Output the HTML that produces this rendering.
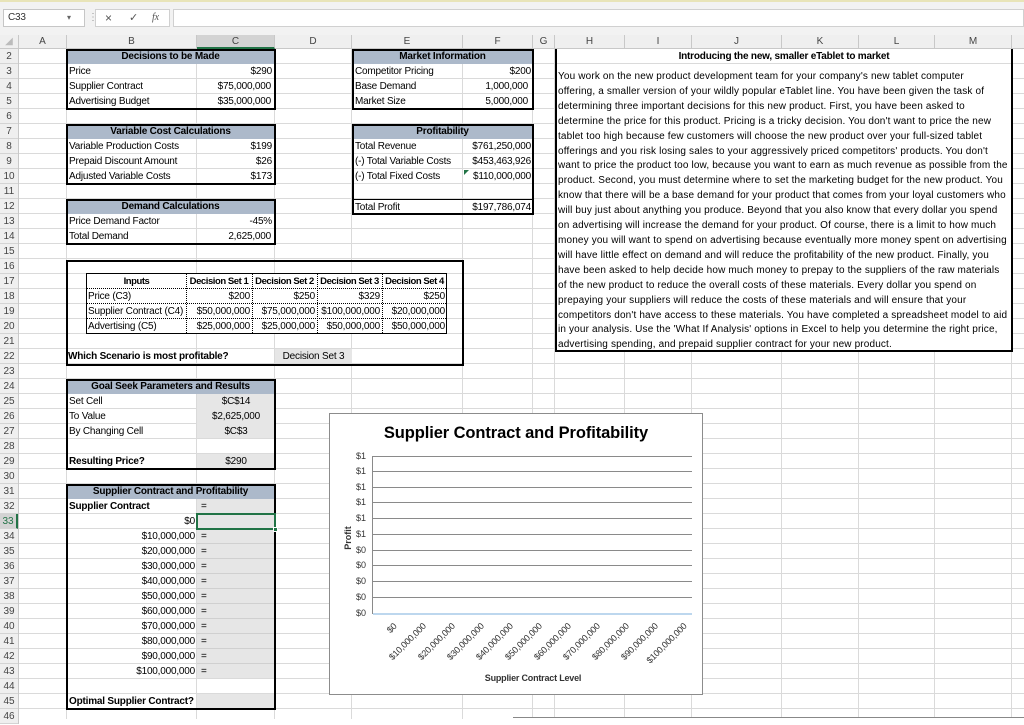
<!DOCTYPE html>
<html><head><meta charset="utf-8">
<style>
*{margin:0;padding:0;box-sizing:border-box}
body{width:1024px;height:719px;overflow:hidden;position:relative;background:#fff;font-family:"Liberation Sans",Arial,sans-serif;font-size:10px;color:#000}
.a{position:absolute}
.t{position:absolute;white-space:nowrap;line-height:16px;height:15px;font-size:10px;letter-spacing:-0.2px}
.b{font-weight:bold}
.r{text-align:right}
.c{text-align:center}
.vl{position:absolute;top:35px;width:1px;height:684px;background:#dadada}
.ch{position:absolute;top:35px;height:14px;line-height:14px;text-align:center;font-size:10px;color:#444;border-right:1px solid #c8c8c8}
.box{position:absolute;border:2px solid #000}
.hf{position:absolute;background:#acb9ca}
.g{position:absolute;background:#e6e6e6}
.rh div{height:15px;line-height:16px;border-bottom:1px solid #d4d4d4;text-align:center;font-size:10px;color:#444}
.yl{position:absolute;left:330px;width:36px;text-align:right;font-size:9px;line-height:10px;color:#333}
.gl{position:absolute;left:373px;width:319px;height:1px;background:#8a8a8a}
.xl{position:absolute;top:621px;width:0;height:0}
.xl span{position:absolute;right:0;top:0;transform:rotate(-45deg);transform-origin:100% 0;font-size:9px;white-space:nowrap;color:#333;letter-spacing:-0.2px}
.p{position:absolute;left:558px;top:70px;font-size:10px;line-height:14.9px;letter-spacing:0.15px;white-space:nowrap}
.dl{position:absolute;border-top:1px dotted #000}
.dv{position:absolute;border-left:1px dotted #000}
.sh{font-size:9.5px;letter-spacing:-0.45px}
</style></head><body>

<div class="a" style="left:0;top:0;width:1024px;height:35px;background:#f2f2f2;border-top:2px solid #e8e4b8"></div>
<div class="a" style="left:3px;top:9px;width:82px;height:18px;background:#fff;border:1px solid #c6c6c6"></div>
<div class="t" style="left:8px;top:10px;color:#333">C33</div>
<div class="t" style="left:67px;top:10px;font-size:8px;color:#666">▾</div>
<div class="t" style="left:88px;top:10px;color:#999">⋮</div>
<div class="a" style="left:95px;top:9px;width:75px;height:18px;background:#fff;border:1px solid #d0d0d0"></div>
<div class="t" style="left:105px;top:10px;font-size:12px;color:#555">×</div>
<div class="t" style="left:129px;top:10px;font-size:11px;color:#555">✓</div>
<div class="t" style="left:152px;top:10px;font-style:italic;font-family:'Liberation Serif',serif;color:#555">fx</div>
<div class="a" style="left:173px;top:9px;width:851px;height:18px;background:#fff;border:1px solid #d0d0d0"></div>

<div class="a" style="left:19px;top:49px;width:1005px;height:670px;background:repeating-linear-gradient(to bottom,transparent 0,transparent 14px,#dadada 14px,#dadada 15px)"></div>
<div class="vl" style="left:66px"></div><div class="vl" style="left:196px"></div><div class="vl" style="left:274px"></div><div class="vl" style="left:351px"></div><div class="vl" style="left:462px"></div><div class="vl" style="left:532px"></div><div class="vl" style="left:554px"></div><div class="vl" style="left:624px"></div><div class="vl" style="left:691px"></div><div class="vl" style="left:781px"></div><div class="vl" style="left:858px"></div><div class="vl" style="left:934px"></div><div class="vl" style="left:1011px"></div>

<div class="a" style="left:0;top:35px;width:1024px;height:14px;background:#efefef;border-bottom:1px solid #c8c8c8"></div>
<div class="ch" style="left:0;width:19px;color:#bbb">◢</div>
<div class="ch" style="left:19px;width:48px">A</div>
<div class="ch" style="left:67px;width:130px">B</div>
<div class="ch" style="left:197px;width:78px;background:#d3d3d3;border-bottom:2px solid #217346">C</div>
<div class="ch" style="left:275px;width:77px">D</div>
<div class="ch" style="left:352px;width:111px">E</div>
<div class="ch" style="left:463px;width:70px">F</div>
<div class="ch" style="left:533px;width:22px">G</div>
<div class="ch" style="left:555px;width:70px">H</div>
<div class="ch" style="left:625px;width:67px">I</div>
<div class="ch" style="left:692px;width:90px">J</div>
<div class="ch" style="left:782px;width:77px">K</div>
<div class="ch" style="left:859px;width:76px">L</div>
<div class="ch" style="left:935px;width:77px">M</div>

<div class="a rh" style="left:0;top:49px;width:19px;background:#efefef;border-right:1px solid #c8c8c8">
<div>2</div><div>3</div><div>4</div><div>5</div><div>6</div><div>7</div><div>8</div><div>9</div><div>10</div><div>11</div><div>12</div><div>13</div><div>14</div><div>15</div><div>16</div><div>17</div><div>18</div><div>19</div><div>20</div><div>21</div><div>22</div><div>23</div><div>24</div><div>25</div><div>26</div><div>27</div><div>28</div><div>29</div><div>30</div><div>31</div><div>32</div><div style="background:#d3d3d3;color:#217346;border-right:2px solid #217346">33</div><div>34</div><div>35</div><div>36</div><div>37</div><div>38</div><div>39</div><div>40</div><div>41</div><div>42</div><div>43</div><div>44</div><div>45</div><div>46</div>
</div>

<div class="hf" style="left:66px;top:49px;width:209px;height:15px"></div>
<div class="box" style="left:66px;top:49px;width:210px;height:61px"></div>
<div class="t b c" style="left:66px;top:49px;width:209px">Decisions to be Made</div>
<div class="t" style="left:69px;top:64px">Price</div><div class="t r" style="left:197px;top:64px;width:75px">$290</div>
<div class="t" style="left:69px;top:79px">Supplier Contract</div><div class="t r" style="left:197px;top:79px;width:74px">$75,000,000</div>
<div class="t" style="left:69px;top:94px">Advertising Budget</div><div class="t r" style="left:197px;top:94px;width:74px">$35,000,000</div>

<div class="hf" style="left:352px;top:49px;width:181px;height:15px"></div>
<div class="box" style="left:352px;top:49px;width:182px;height:61px"></div>
<div class="t b c" style="left:352px;top:49px;width:181px">Market Information</div>
<div class="t" style="left:355px;top:64px">Competitor Pricing</div><div class="t r" style="left:463px;top:64px;width:68px">$200</div>
<div class="t" style="left:355px;top:79px">Base Demand</div><div class="t r" style="left:463px;top:79px;width:65px">1,000,000</div>
<div class="t" style="left:355px;top:94px">Market Size</div><div class="t r" style="left:463px;top:94px;width:65px">5,000,000</div>

<div class="hf" style="left:66px;top:124px;width:209px;height:15px"></div>
<div class="box" style="left:66px;top:124px;width:210px;height:61px"></div>
<div class="t b c" style="left:66px;top:124px;width:209px">Variable Cost Calculations</div>
<div class="t" style="left:69px;top:139px">Variable Production Costs</div><div class="t r" style="left:197px;top:139px;width:75px">$199</div>
<div class="t" style="left:69px;top:154px">Prepaid Discount Amount</div><div class="t r" style="left:197px;top:154px;width:75px">$26</div>
<div class="t" style="left:69px;top:169px">Adjusted Variable Costs</div><div class="t r" style="left:197px;top:169px;width:75px">$173</div>

<div class="hf" style="left:352px;top:124px;width:181px;height:15px"></div>
<div class="box" style="left:352px;top:124px;width:182px;height:91px"></div>
<div class="a" style="left:352px;top:199px;width:182px;height:1px;background:#000"></div>
<div class="t b c" style="left:352px;top:124px;width:181px">Profitability</div>
<div class="t" style="left:355px;top:139px">Total Revenue</div><div class="t r" style="left:463px;top:139px;width:68px">$761,250,000</div>
<div class="t" style="left:355px;top:154px">(-) Total Variable Costs</div><div class="t r" style="left:463px;top:154px;width:68px">$453,463,926</div>
<div class="t" style="left:355px;top:169px">(-) Total Fixed Costs</div><div class="t r" style="left:463px;top:169px;width:68px">$110,000,000</div>
<div class="a" style="left:464px;top:170px;width:0;height:0;border-top:5px solid #217346;border-right:5px solid transparent"></div>
<div class="t" style="left:355px;top:200px">Total Profit</div><div class="t r" style="left:463px;top:200px;width:68px">$197,786,074</div>

<div class="hf" style="left:66px;top:199px;width:209px;height:15px"></div>
<div class="box" style="left:66px;top:199px;width:210px;height:46px"></div>
<div class="t b c" style="left:66px;top:199px;width:209px">Demand Calculations</div>
<div class="t" style="left:69px;top:214px">Price Demand Factor</div><div class="t r" style="left:197px;top:214px;width:75px">-45%</div>
<div class="t" style="left:69px;top:229px">Total Demand</div><div class="t r" style="left:197px;top:229px;width:74px">2,625,000</div>

<div class="box" style="left:66px;top:260px;width:398px;height:106px"></div>
<div class="a" style="left:86px;top:273px;width:361px;height:61px;border:1px solid #000;background:#fff"></div>
<div class="dl" style="left:87px;top:288px;width:359px"></div><div class="dl" style="left:87px;top:303px;width:359px"></div><div class="dl" style="left:87px;top:318px;width:359px"></div>
<div class="dv" style="left:186px;top:274px;height:59px"></div><div class="dv" style="left:252px;top:274px;height:59px"></div><div class="dv" style="left:317px;top:274px;height:59px"></div><div class="dv" style="left:382px;top:274px;height:59px"></div>
<div class="t b c sh" style="left:87px;top:274px;width:99px">Inputs</div>
<div class="t b c sh" style="left:186px;top:274px;width:66px">Decision Set 1</div>
<div class="t b c sh" style="left:252px;top:274px;width:65px">Decision Set 2</div>
<div class="t b c sh" style="left:317px;top:274px;width:65px">Decision Set 3</div>
<div class="t b c sh" style="left:382px;top:274px;width:65px">Decision Set 4</div>
<div class="t" style="left:88px;top:289px">Price (C3)</div>
<div class="t r" style="left:186px;top:289px;width:64px">$200</div><div class="t r" style="left:252px;top:289px;width:63px">$250</div><div class="t r" style="left:317px;top:289px;width:63px">$329</div><div class="t r" style="left:382px;top:289px;width:63px">$250</div>
<div class="t" style="left:88px;top:304px">Supplier Contract (C4)</div>
<div class="t r" style="left:186px;top:304px;width:64px">$50,000,000</div><div class="t r" style="left:252px;top:304px;width:63px">$75,000,000</div><div class="t r" style="left:317px;top:304px;width:63px">$100,000,000</div><div class="t r" style="left:382px;top:304px;width:63px">$20,000,000</div>
<div class="t" style="left:88px;top:319px">Advertising (C5)</div>
<div class="t r" style="left:186px;top:319px;width:64px">$25,000,000</div><div class="t r" style="left:252px;top:319px;width:63px">$25,000,000</div><div class="t r" style="left:317px;top:319px;width:63px">$50,000,000</div><div class="t r" style="left:382px;top:319px;width:63px">$50,000,000</div>
<div class="g" style="left:275px;top:349px;width:77px;height:14px"></div>
<div class="t b" style="left:68px;top:349px">Which Scenario is most profitable?</div>
<div class="t c" style="left:275px;top:349px;width:77px">Decision Set 3</div>

<div class="hf" style="left:66px;top:379px;width:209px;height:15px"></div>
<div class="g" style="left:197px;top:394px;width:78px;height:44px"></div>
<div class="g" style="left:197px;top:454px;width:78px;height:14px"></div>
<div class="box" style="left:66px;top:379px;width:210px;height:91px"></div>
<div class="t b c" style="left:66px;top:379px;width:209px">Goal Seek Parameters and Results</div>
<div class="t" style="left:69px;top:394px">Set Cell</div><div class="t c" style="left:197px;top:394px;width:78px">$C$14</div>
<div class="t" style="left:69px;top:409px">To Value</div><div class="t c" style="left:197px;top:409px;width:78px">$2,625,000</div>
<div class="t" style="left:69px;top:424px">By Changing Cell</div><div class="t c" style="left:197px;top:424px;width:78px">$C$3</div>
<div class="t b" style="left:69px;top:454px">Resulting Price?</div><div class="t c" style="left:197px;top:454px;width:78px">$290</div>

<div class="hf" style="left:66px;top:484px;width:209px;height:15px"></div>
<div class="g" style="left:197px;top:499px;width:78px;height:179px;background:repeating-linear-gradient(to bottom,#e6e6e6 0,#e6e6e6 14px,#d0d0d0 14px,#d0d0d0 15px)"></div>
<div class="g" style="left:197px;top:694px;width:78px;height:15px"></div>
<div class="box" style="left:66px;top:484px;width:210px;height:226px"></div>
<div class="t b c" style="left:66px;top:484px;width:209px">Supplier Contract and Profitability</div>
<div class="t b" style="left:69px;top:499px">Supplier Contract</div><div class="t" style="left:201px;top:499px">=</div>
<div class="t r" style="left:70px;top:514px;width:125px">$0</div>
<div class="a" style="left:196px;top:513px;width:80px;height:17px;border:2px solid #217346"></div>
<div class="a" style="left:273px;top:527px;width:5px;height:5px;background:#217346;border:1px solid #fff"></div>
<div class="t r" style="left:70px;top:529px;width:125px">$10,000,000</div><div class="t" style="left:201px;top:529px">=</div>
<div class="t r" style="left:70px;top:544px;width:125px">$20,000,000</div><div class="t" style="left:201px;top:544px">=</div>
<div class="t r" style="left:70px;top:559px;width:125px">$30,000,000</div><div class="t" style="left:201px;top:559px">=</div>
<div class="t r" style="left:70px;top:574px;width:125px">$40,000,000</div><div class="t" style="left:201px;top:574px">=</div>
<div class="t r" style="left:70px;top:589px;width:125px">$50,000,000</div><div class="t" style="left:201px;top:589px">=</div>
<div class="t r" style="left:70px;top:604px;width:125px">$60,000,000</div><div class="t" style="left:201px;top:604px">=</div>
<div class="t r" style="left:70px;top:619px;width:125px">$70,000,000</div><div class="t" style="left:201px;top:619px">=</div>
<div class="t r" style="left:70px;top:634px;width:125px">$80,000,000</div><div class="t" style="left:201px;top:634px">=</div>
<div class="t r" style="left:70px;top:649px;width:125px">$90,000,000</div><div class="t" style="left:201px;top:649px">=</div>
<div class="t r" style="left:70px;top:664px;width:125px">$100,000,000</div><div class="t" style="left:201px;top:664px">=</div>
<div class="t b" style="left:69px;top:694px">Optimal Supplier Contract?</div>

<div class="a" style="left:555px;top:49px;width:458px;height:303px;background:#fff;border:2px solid #000;border-top:none"></div>
<div class="a" style="left:557px;top:63px;width:454px;height:1px;background:#dadada"></div>
<div class="t b c" style="left:555px;top:49px;width:458px">Introducing the new, smaller eTablet to market</div>
<div class="p">You work on the new product development team for your company's new tablet computer<br>offering, a smaller version of your wildly popular eTablet line. You have been given the task of<br>determining three important decisions for this new product. First, you have been asked to<br>determine the price for this product. Pricing is a tricky decision. You don't want to price the new<br>tablet too high because few customers will choose the new product over your full-sized tablet<br>offerings and you risk losing sales to your aggressively priced competitors' products. You don't<br>want to price the product too low, because you want to earn as much revenue as possible from the<br>product. Second, you must determine where to set the marketing budget for the new product. You<br>know that there will be a base demand for your product that comes from your loyal customers who<br>will buy just about anything you produce. Beyond that you also know that every dollar you spend<br>on advertising will increase the demand for your product. Of course, there is a limit to how much<br>money you will want to spend on advertising because eventually more money spent on advertising<br>will have little effect on demand and will reduce the profitability of the new product. Finally, you<br>have been asked to help decide how much money to prepay to the suppliers of the raw materials<br>of the new product to reduce the overall costs of these materials. Every dollar you spend on<br>prepaying your suppliers will reduce the costs of these materials and will ensure that your<br>competitors don't have access to these materials. You have completed a spreadsheet model to aid<br>in your analysis. Use the 'What If Analysis' options in Excel to help you determine the right price,<br>advertising spending, and prepaid supplier contract for your new product.</div>

<div class="a" style="left:329px;top:413px;width:374px;height:282px;background:#fff;border:1px solid #8c8c8c"></div>
<div class="t b c" style="left:329px;top:423px;width:374px;font-size:16.5px;height:20px;line-height:20px;letter-spacing:-0.1px">Supplier Contract and Profitability</div>
<div class="a" style="left:372px;top:456px;width:1px;height:158px;background:#8a8a8a"></div>
<div class="gl" style="top:456px"></div><div class="gl" style="top:471px"></div><div class="gl" style="top:487px"></div><div class="gl" style="top:502px"></div><div class="gl" style="top:518px"></div><div class="gl" style="top:534px"></div><div class="gl" style="top:550px"></div><div class="gl" style="top:565px"></div><div class="gl" style="top:581px"></div><div class="gl" style="top:597px"></div>
<div class="gl" style="top:613px;background:#bdd7ee;height:2px"></div>
<div class="yl" style="top:451px">$1</div><div class="yl" style="top:466px">$1</div><div class="yl" style="top:482px">$1</div><div class="yl" style="top:497px">$1</div><div class="yl" style="top:513px">$1</div><div class="yl" style="top:529px">$1</div><div class="yl" style="top:545px">$0</div><div class="yl" style="top:560px">$0</div><div class="yl" style="top:576px">$0</div><div class="yl" style="top:592px">$0</div><div class="yl" style="top:608px">$0</div>
<div class="a b" style="left:330px;top:533px;width:36px;font-size:9px;transform:rotate(-90deg);text-align:center;color:#333">Profit</div>
<div class="xl" style="left:392px"><span>$0</span></div>
<div class="xl" style="left:421px"><span>$10,000,000</span></div>
<div class="xl" style="left:450px"><span>$20,000,000</span></div>
<div class="xl" style="left:479px"><span>$30,000,000</span></div>
<div class="xl" style="left:508px"><span>$40,000,000</span></div>
<div class="xl" style="left:537px"><span>$50,000,000</span></div>
<div class="xl" style="left:566px"><span>$60,000,000</span></div>
<div class="xl" style="left:595px"><span>$70,000,000</span></div>
<div class="xl" style="left:624px"><span>$80,000,000</span></div>
<div class="xl" style="left:653px"><span>$90,000,000</span></div>
<div class="xl" style="left:682px"><span>$100,000,000</span></div>
<div class="t b c" style="left:460px;top:670px;width:146px;font-size:9px;color:#333">Supplier Contract Level</div>
<div class="a" style="left:513px;top:717px;width:511px;height:2px;border-top:1px solid #888;background:#fff"></div>

</body></html>
